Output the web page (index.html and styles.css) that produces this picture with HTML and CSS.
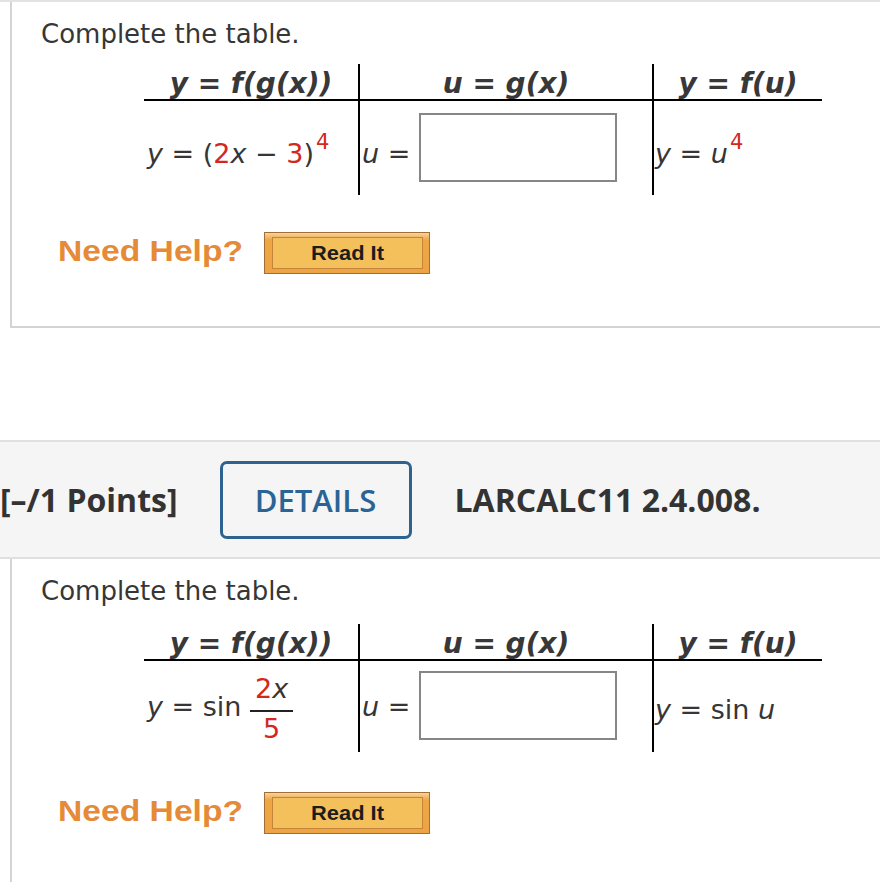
FILE: index.html
```html
<!DOCTYPE html>
<html lang="en">
<head>
<meta charset="utf-8">
<title>Complete the table</title>
<link rel="stylesheet" href="styles.css">
</head>
<body>
<div class="rule"></div>

<section class="card card--closed">
  <p class="prompt">Complete the table.</p>
  <div class="ctable">
    <div class="head c1">y = f(g(x))</div>
    <div class="head c2">u = g(x)</div>
    <div class="head c3">y = f(u)</div>

    <div class="cell r1 c1"><span class="expr"><i>y</i> = (<span class="red">2</span><i>x</i> − <span class="red">3</span>)<sup class="sup red">4</sup></span></div>
    <div class="cell r1 c2"><span class="lbl"><i>u</i> =</span><input class="answer" type="text" aria-label="u"></div>
    <div class="cell r1 c3"><span class="expr"><i>y</i> = <i>u</i><sup class="sup red">4</sup></span></div>
  </div>
  <div class="help">
    <span class="need"><span class="need-txt">Need Help?</span></span>
    <span class="readit"><span class="readit-in"><span class="readit-txt">Read It</span></span></span>
  </div>
</section>

<div class="qbar">
  <span class="points">[–/1 Points]</span>
  <span class="details">DETAILS</span>
  <span class="code">LARCALC11 2.4.008.</span>
</div>

<section class="card card--open">
  <p class="prompt">Complete the table.</p>
  <div class="ctable">
    <div class="head c1">y = f(g(x))</div>
    <div class="head c2">u = g(x)</div>
    <div class="head c3">y = f(u)</div>

    <div class="cell r2 c1"><span class="expr"><i>y</i> = sin <span class="frac"><span class="num"><span class="red">2</span><i>x</i></span><span class="bar"></span><span class="den red">5</span></span></span></div>
    <div class="cell r2 c2"><span class="lbl"><i>u</i> =</span><input class="answer" type="text" aria-label="u"></div>
    <div class="cell r2 c3"><span class="expr"><i>y</i> = sin <i>u</i></span></div>
  </div>
  <div class="help">
    <span class="need"><span class="need-txt">Need Help?</span></span>
    <span class="readit"><span class="readit-in"><span class="readit-txt">Read It</span></span></span>
  </div>
</section>
</body>
</html>
```

FILE: styles.css
```css
html, body {
  margin: 0;
  background: #fff;
}
body {
  font-family: "DejaVu Sans", Verdana, sans-serif;
  color: #363636;
  overflow: hidden;
}
.rule {
  height: 2px;
  background: #e2e2e2;
}
.card {
  margin-left: 10px;
  border-left: 2px solid #d4d4d4;
  padding: 17px 0 0 29px;
}
.card--closed {
  border-bottom: 2px solid #d4d4d4;
  padding-bottom: 52px;
}
.card--open {
  padding-bottom: 80px;
}
.prompt {
  margin: 0;
  font-size: 26px;
  line-height: 30px;
}
.ctable {
  display: grid;
  grid-template-columns: 216px 292px 170px;
  margin: 15px 0 0 103px;
  width: 678px;
  font-size: 27px;
}
.card--open .ctable {
  margin-top: 18px;
}
.head, .cell {
  box-sizing: border-box;
}
.c1 { border-right: 2px solid #000; }
.c3 { border-left: 2px solid #000; }
.head {
  height: 37px;
  border-bottom: 2px solid #000;
  padding-top: 6px;
  line-height: 27px;
  font-size: 28px;
  font-weight: bold;
  font-style: italic;
  text-align: center;
  white-space: nowrap;
  color: #383838;
}
.cell {
  display: flex;
  align-items: flex-start;
  line-height: 30px;
  white-space: nowrap;
}
.cell.c1 { padding-left: 3px; }
.cell.c2 { padding-left: 2px; }
.cell.c3 { padding-left: 1px; }
.r1 { height: 94px; }
.r1.c1, .r1.c3 { padding-top: 38px; }
.r1.c2 { padding-top: 12px; }
.r1 .lbl { margin-top: 26px; }
.r2 { height: 91px; }
.r2.c1 { padding-top: 16px; }
.r2.c2 { padding-top: 10px; }
.r2 .lbl { margin-top: 21px; }
.r2.c3 { padding-top: 34px; }

i { font-style: italic; }
.red { color: #d2281e; }
.sup {
  font-size: 21px;
  line-height: 0;
  vertical-align: 14px;
  margin-left: 2px;
}
.answer {
  width: 198px;
  height: 69px;
  box-sizing: border-box;
  border: 2px solid #868686;
  background: #fff;
  margin: 0 0 0 9px;
  padding: 0;
  outline: none;
  font: inherit;
}
.frac {
  display: inline-flex;
  flex-direction: column;
  align-items: center;
  vertical-align: 18px;
  margin-left: 0;
}
.num, .den {
  display: block;
  line-height: 24px;
  padding: 0 5px;
}
.bar {
  display: block;
  align-self: stretch;
  height: 2px;
  background: #222;
  margin: 9px 0 5px;
}

.help {
  display: flex;
  align-items: center;
  margin: 37px 0 0 17px;
}
.card--open .help {
  margin-top: 40px;
}
.need {
  display: inline-block;
  width: 184px;
  margin-right: 22px;
  line-height: 32px;
}
.need-txt {
  display: inline-block;
  font-family: "Liberation Sans", Arial, sans-serif;
  font-weight: bold;
  font-size: 29px;
  color: #e58a36;
  transform: scaleX(1.16);
  transform-origin: 0 50%;
}
.readit {
  box-sizing: border-box;
  width: 166px;
  height: 42px;
  border: 1px solid #a06f35;
  background: linear-gradient(#f7d39c 0, #efa645 7px, #eea444 100%);
  padding: 4px 6px 4px 7px;
  display: flex;
}
.readit-in {
  flex: 1;
  box-sizing: border-box;
  border: 1px solid #c38538;
  background: #f4c05c;
  display: flex;
  align-items: center;
  justify-content: center;
}
.readit-txt {
  display: inline-block;
  font-family: "Liberation Sans", Arial, sans-serif;
  font-weight: bold;
  font-size: 19.5px;
  color: #1c1c1c;
  transform: scaleX(1.12);
}

.qbar {
  margin-top: 112px;
  height: 115px;
  border-top: 2px solid #e0e0e0;
  border-bottom: 2px solid #e0e0e0;
  background: #f5f5f5;
  display: flex;
  align-items: center;
  font-family: "Open Sans", sans-serif;
  white-space: nowrap;
}
.points {
  font-weight: 700;
  font-size: 32px;
  color: #333;
}
.details {
  margin-left: 42px;
  width: 192px;
  height: 78px;
  box-sizing: border-box;
  border: 3px solid #2d6391;
  border-radius: 7px;
  display: flex;
  align-items: center;
  justify-content: center;
  color: #2a6496;
  font-size: 31px;
  font-weight: 600;
}
.code {
  margin-left: 43px;
  font-weight: 700;
  font-size: 32px;
  color: #333;
}
```
